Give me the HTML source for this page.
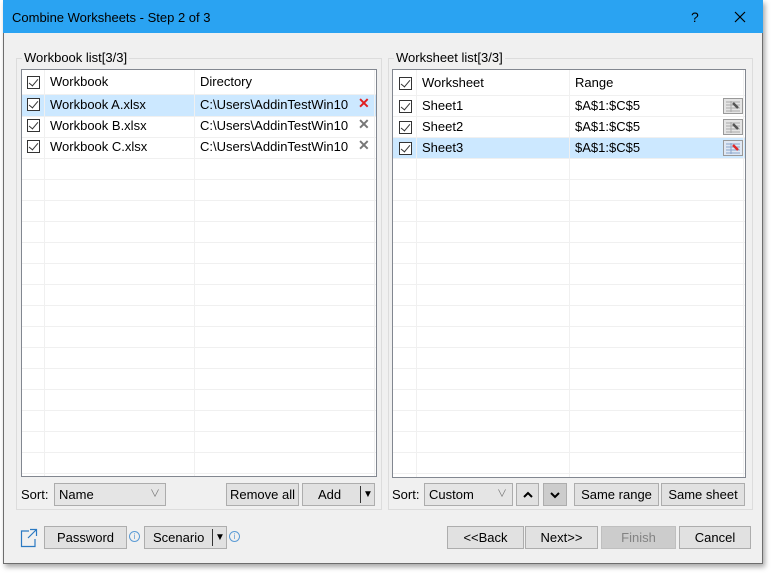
<!DOCTYPE html><html><head><style>
*{box-sizing:border-box;margin:0;padding:0}
body{width:772px;height:574px;background:#fff;font-family:"Liberation Sans","Noto Sans CJK SC",sans-serif;font-size:13px;color:#000;position:relative;overflow:hidden}
.a{position:absolute}
.win{left:3px;top:0;width:760px;height:564px;background:#f0f0f0;border:1px solid #6d6d6d;box-shadow:2px 3px 5px rgba(0,0,0,.35)}
.title{left:3px;top:0;width:760px;height:33px;background:#2aa3f2}
.grp{border:1px solid #dcdcdc}
.grid{background:#fff;border:1px solid #828790;overflow:hidden}
.hl{height:1px;background:#f0f0f0;left:0;right:0}
.vl{width:1px;background:#f0f0f0;top:0;bottom:0}
.cb{width:13px;height:13px;border:1px solid #333;background:#fff}
.cb:after{content:"";position:absolute;left:3px;top:0px;width:4px;height:8px;border-right:1.3px solid #333;border-bottom:1.3px solid #333;transform:rotate(40deg)}
.btn{background:#e1e1e1;border:1px solid #adadad;text-align:center;line-height:21px;height:23px}
.sel{background:#e5e5e5;border:1px solid #acacac;height:23px;line-height:21px;padding-left:4px}
.ic{width:20px;height:16px}
</style></head><body>
<div class="a win"></div>
<div class="a title"></div>
<div class="a" style="left:12px;top:10px;font-size:13px">Combine Worksheets - Step 2 of 3</div>
<div class="a" style="left:691px;top:9px;font-size:14px">?</div>
<svg class="a" style="left:734px;top:11px" width="12" height="12"><path d="M1 1L11 11M11 1L1 11" stroke="#000" stroke-width="1.2"/></svg>

<div class="a grp" style="left:16px;top:58px;width:366px;height:452px"></div>
<div class="a" style="left:22px;top:50px;background:#f0f0f0;padding:0 2px">Workbook list[3/3]</div>
<div class="a grid" style="left:21px;top:69px;width:356px;height:408px">
<div class="a" style="left:0;top:25px;width:354px;height:21px;background:#cce8ff"></div>
<div class="a vl" style="left:22px"></div><div class="a vl" style="left:172px"></div><div class="a vl" style="left:352px"></div>
<div class="a hl" style="top:24px"></div>
<div class="a hl" style="top:46px"></div><div class="a hl" style="top:67px"></div><div class="a hl" style="top:88px"></div><div class="a hl" style="top:109px"></div><div class="a hl" style="top:130px"></div><div class="a hl" style="top:151px"></div><div class="a hl" style="top:172px"></div><div class="a hl" style="top:193px"></div><div class="a hl" style="top:214px"></div><div class="a hl" style="top:235px"></div><div class="a hl" style="top:256px"></div><div class="a hl" style="top:277px"></div><div class="a hl" style="top:298px"></div><div class="a hl" style="top:319px"></div><div class="a hl" style="top:340px"></div><div class="a hl" style="top:361px"></div><div class="a hl" style="top:382px"></div><div class="a hl" style="top:403px"></div>
<div class="a cb" style="left:5px;top:6px"></div><div class="a" style="left:28px;top:4px">Workbook</div><div class="a" style="left:178px;top:4px">Directory</div>
<div class="a cb" style="left:5px;top:28px"></div><div class="a" style="left:28px;top:27px">Workbook A.xlsx</div><div class="a" style="left:178px;top:27px">C:\Users\AddinTestWin10</div><div class="a" style="left:336px;top:25px;color:#e02020;font-weight:bold;font-size:14px">✕</div>
<div class="a cb" style="left:5px;top:49px"></div><div class="a" style="left:28px;top:48px">Workbook B.xlsx</div><div class="a" style="left:178px;top:48px">C:\Users\AddinTestWin10</div><div class="a" style="left:336px;top:46px;color:#777;font-weight:bold;font-size:14px">✕</div>
<div class="a cb" style="left:5px;top:70px"></div><div class="a" style="left:28px;top:69px">Workbook C.xlsx</div><div class="a" style="left:178px;top:69px">C:\Users\AddinTestWin10</div><div class="a" style="left:336px;top:67px;color:#777;font-weight:bold;font-size:14px">✕</div>
</div>
<div class="a" style="left:21px;top:487px">Sort:</div>
<div class="a sel" style="left:54px;top:483px;width:112px">Name<span class="a" style="right:5px;top:0;color:#777;font-size:10px">∨</span></div>
<div class="a btn" style="left:226px;top:483px;width:73px">Remove all</div>
<div class="a btn" style="left:302px;top:483px;width:73px;text-align:left;padding-left:15px">Add<span class="a" style="left:57px;top:2px;width:1px;height:17px;background:#333"></span><span class="a" style="left:60px;top:0;font-size:10px">▼</span></div>

<div class="a grp" style="left:388px;top:58px;width:365px;height:452px"></div>
<div class="a" style="left:394px;top:50px;background:#f0f0f0;padding:0 2px">Worksheet list[3/3]</div>
<div class="a grid" style="left:392px;top:69px;width:354px;height:409px">
<div class="a" style="left:0;top:67px;width:352px;height:21px;background:#cce8ff"></div>
<div class="a vl" style="left:23px"></div><div class="a vl" style="left:176px"></div><div class="a vl" style="left:350px"></div>
<div class="a hl" style="top:25px"></div>
<div class="a hl" style="top:46px"></div><div class="a hl" style="top:67px"></div><div class="a hl" style="top:88px"></div><div class="a hl" style="top:109px"></div><div class="a hl" style="top:130px"></div><div class="a hl" style="top:151px"></div><div class="a hl" style="top:172px"></div><div class="a hl" style="top:193px"></div><div class="a hl" style="top:214px"></div><div class="a hl" style="top:235px"></div><div class="a hl" style="top:256px"></div><div class="a hl" style="top:277px"></div><div class="a hl" style="top:298px"></div><div class="a hl" style="top:319px"></div><div class="a hl" style="top:340px"></div><div class="a hl" style="top:361px"></div><div class="a hl" style="top:382px"></div><div class="a hl" style="top:403px"></div>
<div class="a cb" style="left:6px;top:7px"></div><div class="a" style="left:29px;top:5px">Worksheet</div><div class="a" style="left:182px;top:5px">Range</div>
<div class="a cb" style="left:6px;top:30px"></div><div class="a" style="left:29px;top:28px">Sheet1</div><div class="a" style="left:182px;top:28px">$A$1:$C$5</div>
<svg class="a ic" style="left:330px;top:28px"><rect x=".5" y=".5" width="19" height="15" fill="#e4e4e4" stroke="#999"/><path d="M3 4H17M3 7H17M3 10H17M3 13H17M8 3V14" stroke="#aaa"/><path d="M10 5L15 10" stroke="#555" stroke-width="2.5"/></svg>
<div class="a cb" style="left:6px;top:51px"></div><div class="a" style="left:29px;top:49px">Sheet2</div><div class="a" style="left:182px;top:49px">$A$1:$C$5</div>
<svg class="a ic" style="left:330px;top:49px"><rect x=".5" y=".5" width="19" height="15" fill="#e4e4e4" stroke="#999"/><path d="M3 4H17M3 7H17M3 10H17M3 13H17M8 3V14" stroke="#aaa"/><path d="M10 5L15 10" stroke="#555" stroke-width="2.5"/></svg>
<div class="a cb" style="left:6px;top:72px"></div><div class="a" style="left:29px;top:70px">Sheet3</div><div class="a" style="left:182px;top:70px">$A$1:$C$5</div>
<svg class="a ic" style="left:330px;top:70px"><rect x=".5" y=".5" width="19" height="15" fill="#dfe8f4" stroke="#999"/><path d="M3 4H17M3 7H17M3 10H17M3 13H17M8 3V14" stroke="#8aa6cc"/><path d="M10 5L15 10" stroke="#e02a2a" stroke-width="2.5"/></svg>
</div>
<div class="a" style="left:392px;top:487px">Sort:</div>
<div class="a sel" style="left:424px;top:483px;width:89px">Custom<span class="a" style="right:5px;top:0;color:#777;font-size:10px">∨</span></div>
<div class="a btn" style="left:516px;top:483px;width:23px"><svg class="a" style="left:6px;top:7px" width="10" height="8"><path d="M1 6L5 2L9 6" stroke="#000" stroke-width="2" fill="none"/></svg></div>
<div class="a btn" style="left:543px;top:483px;width:24px;background:#ccc"><svg class="a" style="left:6px;top:7px" width="10" height="8"><path d="M1 2L5 6L9 2" stroke="#000" stroke-width="2" fill="none"/></svg></div>
<div class="a btn" style="left:574px;top:483px;width:85px">Same range</div>
<div class="a btn" style="left:661px;top:483px;width:84px">Same sheet</div>

<svg class="a" style="left:20px;top:528px" width="18" height="20"><path d="M9 3H1.5V18.5H15V11M10 1.5H16.5V8M16.5 1.5L8 10" stroke="#2b79c2" stroke-width="1.2" fill="none"/></svg>
<div class="a btn" style="left:44px;top:526px;width:83px">Password</div>
<div class="a" style="left:129px;top:531px;width:11px;height:11px;border:1px solid #5b9bd5;border-radius:50%;color:#5b9bd5;font-size:8px;line-height:9px;text-align:center">i</div>
<div class="a btn" style="left:144px;top:526px;width:83px;text-align:left;padding-left:8px">Scenario<span class="a" style="left:67px;top:2px;width:1px;height:17px;background:#333"></span><span class="a" style="left:70px;top:0;font-size:10px">▼</span></div>
<div class="a" style="left:229px;top:531px;width:11px;height:11px;border:1px solid #5b9bd5;border-radius:50%;color:#5b9bd5;font-size:8px;line-height:9px;text-align:center">i</div>
<div class="a btn" style="left:447px;top:526px;width:77px">&lt;&lt;Back</div>
<div class="a btn" style="left:525px;top:526px;width:73px">Next&gt;&gt;</div>
<div class="a btn" style="left:601px;top:526px;width:75px;background:#cccccc;border-color:#bfbfbf;color:#838383">Finish</div>
<div class="a btn" style="left:679px;top:526px;width:72px">Cancel</div>
</body></html>
